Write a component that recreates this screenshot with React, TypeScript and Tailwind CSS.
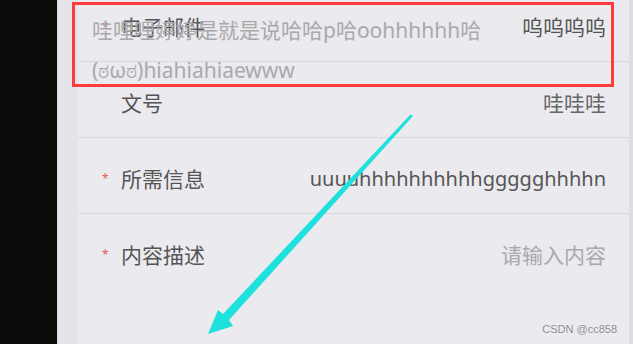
import React from 'react';

const font = { fontFamily: '"Noto Sans", "Noto Sans CJK SC", sans-serif' };

type RowProps = {
  label: string;
  required?: boolean;
  value?: string;
  placeholder?: boolean;
  valueClass?: string;
};

function Row({ label, required, value, placeholder, valueClass }: RowProps) {
  return (
    <div className="h-[76px] shrink-0 border-b border-[#d9d8dd] flex items-center pt-[6px] pl-[24px] pr-[23px]">
      <span className="w-[19px] self-center text-[12px] text-[#e65a5a] leading-none">{required ? '*' : ''}</span>
      <span className="text-[21px] leading-[30px] text-[#555555] whitespace-nowrap">{label}</span>
      <span
        className={`ml-auto leading-[30px] whitespace-nowrap ${
          placeholder ? 'text-[#a9a9ac]' : valueClass || 'text-[21px] text-[#555555]'
        }`}
      >
        {value}
      </span>
    </div>
  );
}

export default function App() {
  return (
    <div className="relative w-[633px] h-[344px] overflow-hidden flex bg-[#0b0d0b]" style={font}>
      <div className="w-[57px] shrink-0 bg-[#0b0d0b]" />
      <div className="w-[21px] shrink-0 bg-[#e4e3e8] border-l border-[#d6d5da]" />
      <div className="flex-1 bg-[#ebeaef] flex flex-col -mt-[14px]">
        <div className="relative">
          <Row label="电子邮件" required value="呜呜呜呜" />
          <div className="absolute left-[14px] top-[24px] text-[21px] leading-[40px] text-[#a9a9ac] whitespace-nowrap">
            <div>哇哩哩婷婷是就是说哈哈p哈oohhhhhh哈</div>
            <div>(ಠωಠ)hiahiahiaewww</div>
          </div>
        </div>
        <Row label="文号" value="哇哇哇" valueClass="text-[21px] text-[#666666]" />
        <Row label="所需信息" required value="uuuuhhhhhhhhhhggggghhhhn" valueClass="text-[20px] text-[#555555]" />
        <div className="flex-1 flex flex-col">
          <div className="h-[76px] shrink-0 flex items-center pt-[6px] pl-[24px] pr-[23px]">
            <span className="w-[19px] text-[12px] text-[#e65a5a] leading-none">*</span>
            <span className="text-[21px] leading-[30px] text-[#555555] whitespace-nowrap">内容描述</span>
            <span className="ml-auto text-[21px] leading-[30px] text-[#a9a9ac] whitespace-nowrap">请输入内容</span>
          </div>
        </div>
      </div>
      <div className="w-[4px] shrink-0 bg-[#dedde2]" />

      <div className="absolute left-[72px] top-[2px] w-[542px] h-[85px] border-[3px] border-[#ff3b3b] pointer-events-none" />

      <svg className="absolute left-0 top-0 pointer-events-none" width="633" height="344" viewBox="0 0 633 344">
        <polygon
          points="410.5,114.5 413,116 229,320 233,326 208,334 218,310 223,314"
          fill="#1ee0dc"
        />
      </svg>

      <div
        className="absolute right-[16px] bottom-[7px] text-[11px] text-[#8a8a8c]"
        style={{ fontFamily: '"Liberation Sans", sans-serif', textShadow: '0 0 1px #ffffff' }}
      >
        CSDN @cc858
      </div>
    </div>
  );
}
